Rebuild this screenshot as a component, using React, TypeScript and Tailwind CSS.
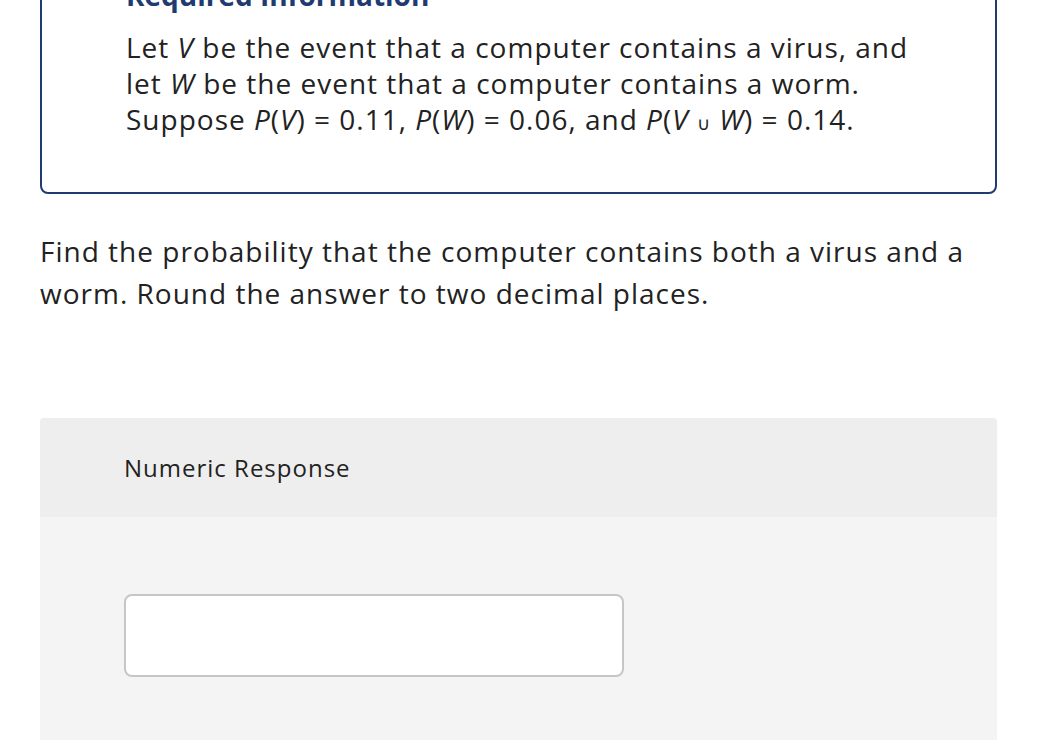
export default function App() {
  const v = (s: string) => <i className="italic">{s}</i>

  return (
    <div className="min-h-[740px] w-full overflow-hidden bg-white text-[#222222] tracking-[1px] font-['Open_Sans','Liberation_Sans',sans-serif]">
      <div className="ml-[40px] w-[957px]">
        {/* Required information card (scrolled partly out of view) */}
        <div className="-mt-[49px] rounded-[8px] border-2 border-[#1f3b70] pl-[84px] pr-6 pt-[24px] pb-[51px]">
          <h2 className="text-[28px] leading-[36px] font-bold tracking-normal text-[#1f3b70]">Required Information</h2>
          <p className="mt-[16px] text-[28px] leading-[36px]">
            Let {v('V')} be the event that a computer contains a virus, and
            <br />
            let {v('W')} be the event that a computer contains a worm.
            <br />
            Suppose {v('P')}({v('V')}) = 0.11, {v('P')}({v('W')}) = 0.06, and {v('P')}({v('V')}{' '}
            <span className="text-[18px]">∪</span> {v('W')}) = 0.14.
          </p>
        </div>

        {/* Question */}
        <p className="mt-[36px] text-[28px] leading-[42px]">
          Find the probability that the computer contains both a virus and a worm. Round the answer to two decimal
          places.
        </p>

        {/* Response panel */}
        <div className="mt-[104px] overflow-hidden rounded-t-[4px] bg-[#f4f4f4]">
          <div className="flex h-[99px] items-center bg-[#eeeeee] pl-[84px]">
            <span className="text-[24px] leading-[30px]">Numeric Response</span>
          </div>
          <div className="pl-[84px] pt-[77px] pb-[80px]">
            <input
              type="text"
              aria-label="Numeric Response"
              className="block h-[83px] w-[500px] rounded-[8px] border-2 border-[#c6c6c6] bg-white px-4 text-[22px] outline-none"
            />
          </div>
        </div>
      </div>
    </div>
  )
}
